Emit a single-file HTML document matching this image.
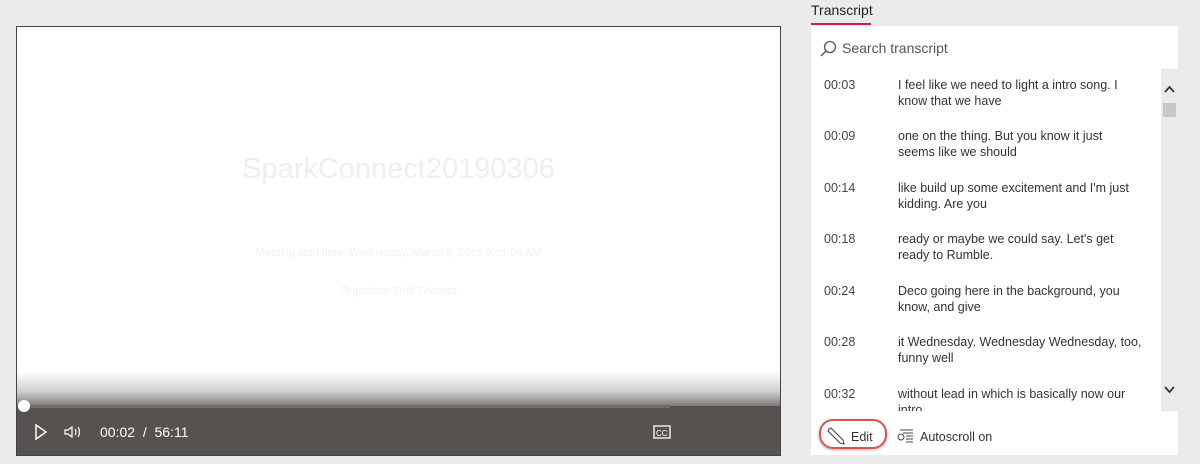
<!DOCTYPE html>
<html><head><style>
body{margin:0;width:1200px;height:464px;background:#ebebeb;font-family:"Liberation Sans",sans-serif;position:relative;overflow:hidden}
.v{position:absolute;left:16px;top:26px;width:763px;height:428px;background:#fff;border:1px solid #444;overflow:hidden}
.t1{position:absolute;left:0;right:0;top:126px;text-align:center;font-size:29px;color:#efedf0}
.t2{position:absolute;left:0;right:0;top:220px;text-align:center;font-size:11px;color:#f2f0f2}
.t3{position:absolute;left:0;right:0;top:258px;text-align:center;font-size:11px;color:#f2f0f2}
.grad{position:absolute;left:0;right:0;top:345px;height:35px;background:linear-gradient(#fff,#cfcfcf 55%,#777472)}
.bar{position:absolute;left:0;right:0;top:379px;height:49px;background:#565250}
.prog{position:absolute;left:0;right:110px;top:378px;height:3px;background:#6d6a68}
.dot{position:absolute;left:1px;top:373px;width:12px;height:12px;border-radius:50%;background:#fff}
.time{position:absolute;left:83px;top:397px;color:#fff;font-size:14px}
.tab{position:absolute;left:811px;top:2px;font-size:14px;color:#222}
.ul{position:absolute;left:811px;top:23px;width:60px;height:2px;background:#d01c5c}
.search{position:absolute;left:811px;top:26px;width:367px;height:43px;background:#fff}
.search span{position:absolute;left:31px;top:14px;font-size:14px;color:#555}
.list{position:absolute;left:811px;top:69px;width:367px;height:342px;background:#fff;overflow:hidden}
.sb{position:absolute;right:0;top:0;width:17px;height:342px;background:#eaeaea}
.row{position:absolute;left:0;width:340px;font-size:12.5px;color:#333;line-height:16px}
.row b{position:absolute;left:13px;font-weight:normal;color:#444}
.row i{position:absolute;left:87px;font-style:normal;white-space:nowrap}
.bot{position:absolute;left:811px;top:411px;width:367px;height:44px;background:#fff;font-size:12.5px;color:#333}
.edit{position:absolute;left:8px;top:8px;width:68px;height:30px;border:2px solid #d9534f;border-radius:14px;box-sizing:border-box;box-shadow:0 1px 3px rgba(0,0,0,.3)}
</style></head><body>
<div class="v">
<div class="t1">SparkConnect20190306</div>
<div class="t2">Meeting start time: Wednesday, March 6, 2019 9:01:06 AM</div>
<div class="t3">Organizer: Duff Thomas</div>
<div class="grad"></div><div class="bar"></div><div class="prog"></div><div class="dot"></div>
<svg style="position:absolute;left:17px;top:396px" width="14" height="18"><path d="M2 2 L12 9 L2 16 Z" fill="none" stroke="#fff" stroke-width="1.5"/></svg>
<svg style="position:absolute;left:47px;top:398px" width="20" height="14"><path d="M1 5h3l4-3v10l-4-3H1z" fill="none" stroke="#fff" stroke-width="1.2"/><path d="M11 4q2 3 0 6M14 2q3 5 0 10" fill="none" stroke="#fff" stroke-width="1.2"/></svg>
<div class="time">00:02 &nbsp;/ &nbsp;56:11</div>
<svg style="position:absolute;left:636px;top:398px" width="18" height="14"><rect x="1" y="1" width="16" height="12" fill="none" stroke="#fff" stroke-width="1.3"/><text x="3" y="11" font-size="8" fill="#fff" font-family="Liberation Sans">CC</text></svg>
</div>
<div class="tab">Transcript</div><div class="ul"></div>
<div class="search"><svg style="position:absolute;left:8px;top:14px" width="18" height="18"><circle cx="11" cy="7" r="5.5" fill="none" stroke="#555" stroke-width="1.3"/><path d="M7 11 L2 16" stroke="#555" stroke-width="1.5"/></svg><span>Search transcript</span></div>
<div class="list">
<div class="sb"><svg style="position:absolute;left:3px;top:16px" width="11" height="8"><path d="M1 7 L5.5 2 L10 7" fill="none" stroke="#333" stroke-width="1.8"/></svg><div style="position:absolute;left:2px;top:34px;width:13px;height:14px;background:#c8c8c8"></div><svg style="position:absolute;left:3px;top:317px" width="11" height="8"><path d="M1 1 L5.5 6 L10 1" fill="none" stroke="#333" stroke-width="1.8"/></svg></div>
<div class="row" style="top:8px"><b>00:03</b><i>I feel like we need to light a intro song. I<br>know that we have</i></div>
<div class="row" style="top:59px"><b>00:09</b><i>one on the thing. But you know it just<br>seems like we should</i></div>
<div class="row" style="top:111px"><b>00:14</b><i>like build up some excitement and I'm just<br>kidding. Are you</i></div>
<div class="row" style="top:162px"><b>00:18</b><i>ready or maybe we could say. Let's get<br>ready to Rumble.</i></div>
<div class="row" style="top:214px"><b>00:24</b><i>Deco going here in the background, you<br>know, and give</i></div>
<div class="row" style="top:265px"><b>00:28</b><i>it Wednesday. Wednesday Wednesday, too,<br>funny well</i></div>
<div class="row" style="top:317px"><b>00:32</b><i>without lead in which is basically now our<br>intro</i></div>
</div>
<div class="bot">
<div class="edit"></div>
<svg style="position:absolute;left:16px;top:16px" width="18" height="18"><path d="M2 2 L4 1 L16 13 L17 17 L13 16 L1 4 Z" fill="none" stroke="#444" stroke-width="1.1"/></svg>
<span style="position:absolute;left:40px;top:19px">Edit</span>
<svg style="position:absolute;left:86px;top:18px" width="17" height="14"><path d="M3 1h13M6 4h10M9 7h7M9 10h7M9 13h7" stroke="#444" stroke-width="1"/><path d="M1 8a3 3 0 1 0 6 0M7 8a3 3 0 0 0-6 0" fill="none" stroke="#444" stroke-width="1"/></svg>
<span style="position:absolute;left:109px;top:19px">Autoscroll on</span>
</div>
</body></html>
